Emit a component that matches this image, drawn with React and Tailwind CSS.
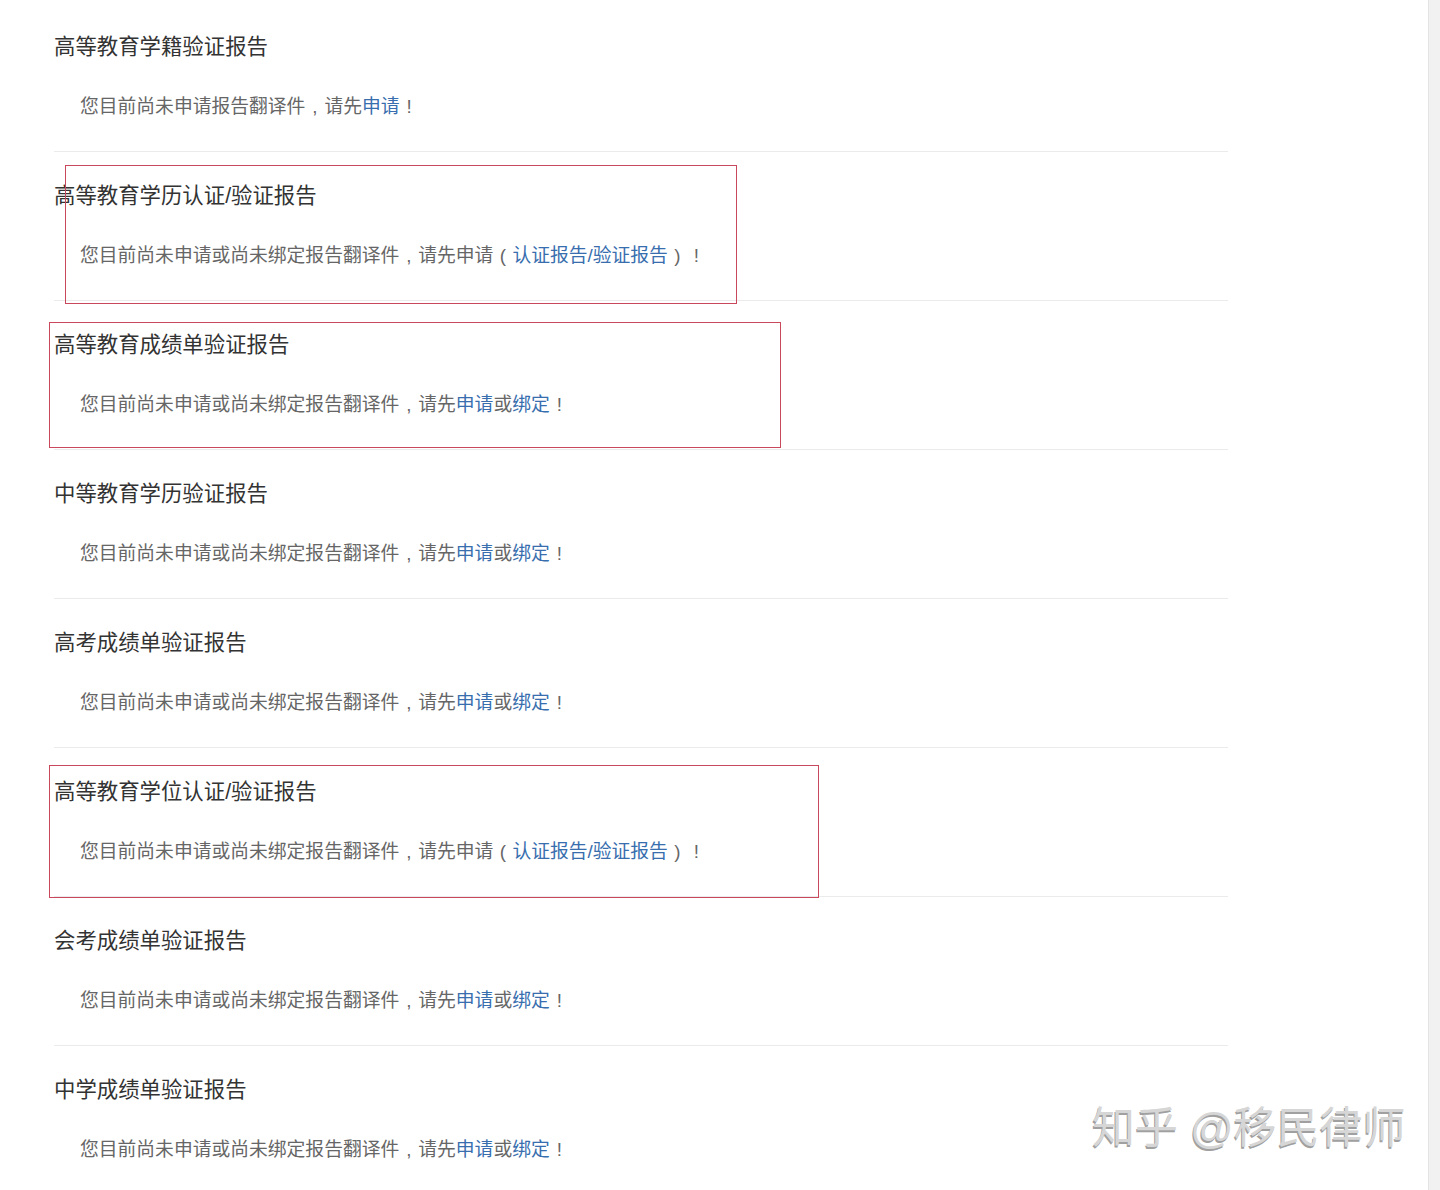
import React from 'react';

const font = { fontFamily: '"Liberation Sans", "Noto Sans CJK SC", sans-serif' };

const Link = ({ children }) => <a className="text-[#386eae] cursor-pointer">{children}</a>;

// full-width punctuation drawn with centred glyphs, as the original font does
const Comma = () => <span className="inline-block w-[19px] text-center">,</span>;
const Bang = () => <span className="inline-block w-[19px] text-center">!</span>;
const Open = () => <span className="inline-block w-[19px] text-center">(</span>;
const Close = () => <span className="inline-block w-[19px] text-center">)</span>;

const sections = [
  { title: '高等教育学籍验证报告', kind: 'apply' },
  { title: '高等教育学历认证/验证报告', kind: 'both' },
  { title: '高等教育成绩单验证报告', kind: 'bind' },
  { title: '中等教育学历验证报告', kind: 'bind' },
  { title: '高考成绩单验证报告', kind: 'bind' },
  { title: '高等教育学位认证/验证报告', kind: 'both' },
  { title: '会考成绩单验证报告', kind: 'bind' },
  { title: '中学成绩单验证报告', kind: 'bind' },
];

const Message = ({ kind }) => {
  if (kind === 'apply') {
    return <>您目前尚未申请报告翻译件<Comma />请先<Link>申请</Link><Bang /></>;
  }
  if (kind === 'both') {
    return (
      <>
        您目前尚未申请或尚未绑定报告翻译件<Comma />请先申请<Open /><Link>认证报告/验证报告</Link><Close /><Bang />
      </>
    );
  }
  return <>您目前尚未申请或尚未绑定报告翻译件<Comma />请先<Link>申请</Link>或<Link>绑定</Link><Bang /></>;
};

// red annotation boxes drawn over the screenshot
const RedBox = ({ className }) => <div className={`absolute border border-[#c9485b] pointer-events-none ${className}`} />;

export default function App() {
  return (
    <div className="relative flex min-h-[1190px] bg-white overflow-hidden" style={font}>
      <main className="flex-1 pl-[54px] pt-[3px]">
        <div className="w-[1174px]">
          {sections.map((s, i) => (
            <section key={i} className="pt-[29px] pb-[29px] border-b border-[#ebebeb] last:border-b-0">
              <h3 className="text-[21.4px] leading-[30px] text-[#333]">{s.title}</h3>
              <p className="mt-[30px] pl-[26px] text-[18.8px] leading-[30px] text-[#666]">
                <Message kind={s.kind} />
              </p>
            </section>
          ))}
        </div>
      </main>
      <div className="w-[12px] bg-[#f1f1f1] border-l border-[#e3e3e3]" />

      <RedBox className="left-[65px] top-[165px] w-[672px] h-[139px]" />
      <RedBox className="left-[49px] top-[322px] w-[732px] h-[126px]" />
      <RedBox className="left-[49px] top-[765px] w-[770px] h-[133px]" />

      <div className="absolute left-[1092px] top-[1100px] text-[43px] leading-[56px] text-[#d6d6d6] [text-shadow:-1px_2px_0_#a0a0a0] whitespace-nowrap select-none">
        知乎 @移民律师
      </div>
    </div>
  );
}
